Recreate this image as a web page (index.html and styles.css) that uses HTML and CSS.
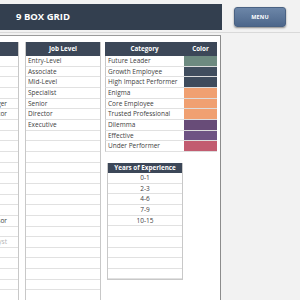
FILE: index.html
```html
<!DOCTYPE html>
<html lang="en">
<head>
    <meta charset="UTF-8">
    <title>9 Box Grid - Settings</title>
    <link rel="stylesheet" href="styles.css">
</head>
<body>

    <div class="topbar">
        <div class="title-bar">9 BOX GRID</div>
        <button class="menu-btn">MENU</button>
    </div>

    <div class="sheet">
        <!-- Columna cortada a la izquierda -->
        <div class="list list-cut">
            <div class="list-head"></div>
            <div class="row"></div>
            <div class="row"></div>
            <div class="row"></div>
            <div class="row"></div>
            <div class="row">Manager</div>
            <div class="row">Director</div>
            <div class="row"></div>
            <div class="row"></div>
            <div class="row"></div>
            <div class="row"></div>
            <div class="row"></div>
            <div class="row"></div>
            <div class="row"></div>
            <div class="row"></div>
            <div class="row"></div>
            <div class="row">Supervisor</div>
            <div class="row"></div>
            <div class="row faint">Analyst</div>
            <div class="row"></div>
            <div class="row"></div>
            <div class="row"></div>
            <div class="row"></div>
            <div class="row"></div>
        </div>

        <div class="list list-job">
            <div class="list-head">Job Level</div>
            <div class="row">Entry-Level</div>
            <div class="row">Associate</div>
            <div class="row">Mid-Level</div>
            <div class="row">Specialist</div>
            <div class="row">Senior</div>
            <div class="row">Director</div>
            <div class="row">Executive</div>
            <div class="row"></div>
            <div class="row"></div>
            <div class="row"></div>
            <div class="row"></div>
            <div class="row"></div>
            <div class="row"></div>
            <div class="row"></div>
            <div class="row"></div>
            <div class="row"></div>
            <div class="row"></div>
            <div class="row"></div>
            <div class="row"></div>
            <div class="row"></div>
            <div class="row"></div>
            <div class="row"></div>
            <div class="row"></div>
        </div>

        <div class="right-side">
            <div class="category-table">
                <div class="cat-head">Category</div>
                <div class="cat-head">Color</div>

                <div class="cat-name">Future Leader</div>
                <div class="swatch" style="background-color: #6d8a80;"></div>
                <div class="cat-name">Growth Employee</div>
                <div class="swatch" style="background-color: #404d5e;"></div>
                <div class="cat-name">High Impact Performer</div>
                <div class="swatch" style="background-color: #3e4b5c;"></div>
                <div class="cat-name">Enigma</div>
                <div class="swatch" style="background-color: #f0a071;"></div>
                <div class="cat-name">Core Employee</div>
                <div class="swatch" style="background-color: #f0a071;"></div>
                <div class="cat-name">Trusted Professional</div>
                <div class="swatch" style="background-color: #f0a071;"></div>
                <div class="cat-name">Dilemma</div>
                <div class="swatch" style="background-color: #684c78;"></div>
                <div class="cat-name">Effective</div>
                <div class="swatch" style="background-color: #6e5383;"></div>
                <div class="cat-name">Under Performer</div>
                <div class="swatch" style="background-color: #c25c70;"></div>
            </div>

            <div class="list list-years">
                <div class="list-head">Years of Experience</div>
                <div class="row">0-1</div>
                <div class="row">2-3</div>
                <div class="row">4-6</div>
                <div class="row">7-9</div>
                <div class="row">10-15</div>
                <div class="row"></div>
                <div class="row"></div>
                <div class="row"></div>
                <div class="row"></div>
                <div class="row"></div>
            </div>
        </div>
    </div>

</body>
</html>
```

FILE: styles.css
```css
/* Estilos Globales */
body {
    margin: 0;
    padding: 0;
    background-color: #f2f2f2;
    font-family: 'Open Sans', 'Liberation Sans', sans-serif;
    color: #404040;
    overflow: hidden;
}

/* Barra superior */
.topbar {
    display: flex;
    height: 32px;
    border-bottom: 1px solid #d9d9d9;
}

.title-bar {
    width: 206px;
    height: 26px;
    margin-top: 4px;
    padding-left: 16px;
    background-color: #333f4f;
    color: #ffffff;
    font-size: 9.5px;
    font-weight: bold;
    line-height: 26px;
}

.menu-btn {
    width: 52px;
    height: 20px;
    margin-top: 7px;
    margin-left: 12px;
    padding: 0;
    border: 1px solid #4a6283;
    border-radius: 3px;
    background: linear-gradient(#6c86a8, #4d678b);
    box-shadow: 0 1px 2px rgba(0, 0, 0, 0.45);
    color: #ffffff;
    font-family: 'Open Sans', sans-serif;
    font-size: 5.5px;
    font-weight: bold;
    letter-spacing: 0.2px;
}

/* Hoja blanca */
.sheet {
    display: flex;
    align-items: flex-start;
    width: 221px;
    height: 280px;
    margin-top: 2px;
    padding-top: 6px;
    background-color: #ffffff;
    border-top: 1px solid #9a9a9a;
    border-right: 1px solid #8c8c8c;
    box-sizing: border-box;
    overflow: hidden;
}

.list {
    border: 1px solid #c8c8c8;
    border-top: none;
    box-sizing: border-box;
    background-color: #ffffff;
}

.list-head {
    height: 14px;
    background-color: #3c4758;
    color: #ffffff;
    font-size: 6.3px;
    font-weight: bold;
    line-height: 14px;
    text-align: center;
}

.row {
    height: 10.67px;
    padding-left: 2px;
    border-bottom: 1px solid #e1e1e1;
    box-sizing: border-box;
    font-size: 6.5px;
    line-height: 10px;
    white-space: nowrap;
    overflow: hidden;
}

.list-cut {
    width: 76px;
    margin-left: -57px;
    flex-shrink: 0;
}

.list-cut .row {
    text-align: right;
    padding-right: 11px;
}

.faint {
    color: #b5b5b5;
}

.list-job {
    width: 76px;
    margin-left: 6px;
    flex-shrink: 0;
}

/* Tabla de categorías */
.right-side {
    margin-left: 4px;
}

.category-table {
    display: grid;
    grid-template-columns: 79px 33px;
    grid-template-rows: 14px;
    grid-auto-rows: 10.67px;
    width: 112px;
}

.cat-head {
    background-color: #3c4758;
    color: #ffffff;
    font-size: 6.3px;
    font-weight: bold;
    line-height: 14px;
    text-align: center;
}

.cat-name {
    padding-left: 2px;
    border-left: 1px solid #c8c8c8;
    border-bottom: 1px solid #e1e1e1;
    font-size: 6.5px;
    line-height: 10px;
    white-space: nowrap;
}

.swatch {
    border-bottom: 1px solid #dcdcdc;
}

.list-years {
    width: 76px;
    margin-top: 11px;
    margin-left: 2px;
}

.list-years .list-head {
    height: 10px;
    line-height: 10px;
}

.list-years .row {
    text-align: center;
    padding-left: 0;
}
```
